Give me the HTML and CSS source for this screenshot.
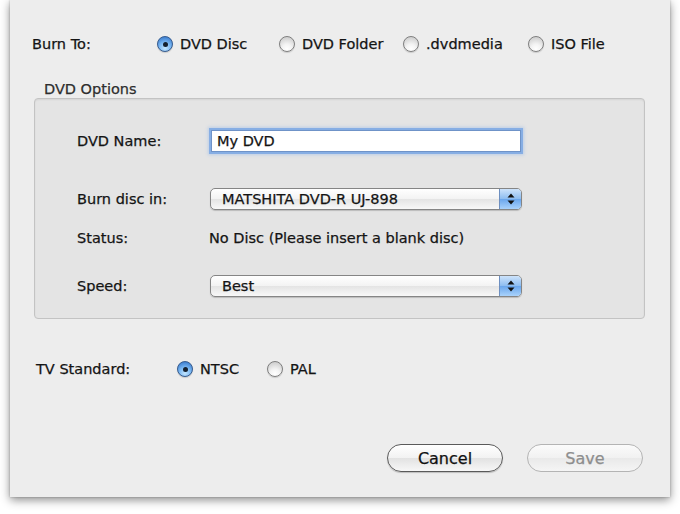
FILE: index.html
```html
<!DOCTYPE html>
<html>
<head>
<meta charset="utf-8">
<link rel="stylesheet" href="styles.css">
</head>
<body>
<div class="window">
  <div class="burn-row">
    <div class="burn-label">Burn To:</div>
    <div class="burn-options">
      <label class="radio-item"><span class="radio on"></span><span>DVD Disc</span></label>
      <label class="radio-item"><span class="radio"></span><span>DVD Folder</span></label>
      <label class="radio-item"><span class="radio"></span><span>.dvdmedia</span></label>
      <label class="radio-item"><span class="radio"></span><span>ISO File</span></label>
    </div>
  </div>

  <div class="legend">DVD Options</div>
  <div class="group">
    <div class="grow row-name">
      <div class="glabel">DVD Name:</div>
      <div class="field"><span>My DVD</span></div>
    </div>
    <div class="grow row-burn">
      <div class="glabel">Burn disc in:</div>
      <div class="popup">
        <span class="popup-text">MATSHITA DVD-R UJ-898</span>
        <span class="popup-arrows">
          <svg width="8" height="12" viewBox="0 0 8 12"><path d="M4 0.5 L7.5 4.5 H0.5 Z M4 11.5 L7.5 7.5 H0.5 Z" fill="#111"/></svg>
        </span>
      </div>
    </div>
    <div class="grow row-status">
      <div class="glabel">Status:</div>
      <div class="status">No Disc (Please insert a blank disc)</div>
    </div>
    <div class="grow row-speed">
      <div class="glabel">Speed:</div>
      <div class="popup">
        <span class="popup-text">Best</span>
        <span class="popup-arrows">
          <svg width="8" height="12" viewBox="0 0 8 12"><path d="M4 0.5 L7.5 4.5 H0.5 Z M4 11.5 L7.5 7.5 H0.5 Z" fill="#111"/></svg>
        </span>
      </div>
    </div>
  </div>

  <div class="tv-row">
    <div class="tv-label">TV Standard:</div>
    <label class="radio-item ntsc"><span class="radio on"></span><span>NTSC</span></label>
    <label class="radio-item"><span class="radio"></span><span>PAL</span></label>
  </div>

  <div class="buttons">
    <div class="button">Cancel</div>
    <div class="button disabled">Save</div>
  </div>
</div>
</body>
</html>
```

FILE: styles.css
```css
html, body {
  margin: 0;
  padding: 0;
  background: #ffffff;
}
body {
  width: 680px;
  height: 514px;
  overflow: hidden;
  font-family: "DejaVu Sans", "Liberation Sans", sans-serif;
  font-size: 14.5px;
  color: #141414;
  -webkit-text-stroke: 0.25px currentColor;
}
.window {
  margin-left: 10px;
  width: 660px;
  height: 497px;
  background: #ededed;
  box-shadow: 0 3px 9px rgba(0, 0, 0, 0.45), 0 0 2px rgba(0, 0, 0, 0.25);
  display: flex;
  flex-direction: column;
}
.burn-row {
  margin-top: 34px;
  height: 20px;
  padding-left: 22px;
  display: flex;
  align-items: center;
}
.burn-label {
  width: 125px;
}
.burn-options {
  display: grid;
  grid-template-columns: 122px 124px 125px auto;
}
.radio-item {
  display: flex;
  align-items: center;
  gap: 7px;
}
.radio {
  box-sizing: border-box;
  width: 16px;
  height: 16px;
  border-radius: 50%;
  border: 1px solid #7e7e7e;
  background: radial-gradient(circle at 50% 85%, #ffffff 0%, #f3f3f3 35%, #d2d2d2 80%);
  box-shadow: 0 1px 1px rgba(0,0,0,0.15);
  display: flex;
  align-items: center;
  justify-content: center;
  flex-shrink: 0;
}
.radio.on {
  border-color: #3b5f90;
  background: radial-gradient(circle at 50% 80%, #c3e6ff 0%, #78b6f2 45%, #3d7fd0 85%), #5b9be0;
}
.radio.on::after {
  content: "";
  width: 5px;
  height: 5px;
  border-radius: 50%;
  background: #14202e;
}
.legend {
  margin-top: 26px;
  height: 18px;
  line-height: 18px;
  padding-left: 34px;
  color: #2e2e2e;
}
.group {
  margin-left: 24px;
  width: 611px;
  height: 221px;
  box-sizing: border-box;
  border: 1px solid #c3c3c3;
  border-radius: 4px;
  background: #e4e4e4;
  box-shadow: inset 0 1px 2px rgba(0,0,0,0.07);
  padding-left: 42px;
  display: flex;
  flex-direction: column;
}
.grow {
  display: flex;
  align-items: center;
}
.glabel {
  width: 132px;
}
.row-name { margin-top: 29px; height: 26px; }
.row-burn { margin-top: 33px; height: 24px; }
.row-status { margin-top: 17px; height: 20px; }
.row-speed { margin-top: 26px; height: 24px; }
.field {
  box-sizing: border-box;
  width: 310px;
  height: 22px;
  margin-left: 2px;
  background: #ffffff;
  border: 1px solid #6f93c8;
  box-shadow: 0 0 0 2px rgba(120, 165, 228, 0.8), 0 0 3px 3px rgba(140, 180, 235, 0.45);
  display: flex;
  align-items: center;
  padding-left: 5px;
}
.popup {
  box-sizing: border-box;
  width: 312px;
  height: 22px;
  margin-left: 1px;
  border: 1px solid #858585;
  border-radius: 5px;
  background: linear-gradient(#ffffff, #f3f3f3 50%, #e4e4e4 51%, #f8f8f8);
  box-shadow: 0 1px 1px rgba(0,0,0,0.18);
  display: flex;
  align-items: center;
  overflow: hidden;
}
.popup-text {
  flex: 1;
  padding-left: 11px;
}
.popup-arrows {
  width: 21px;
  height: 100%;
  border-left: 1px solid #6d8fc0;
  background: linear-gradient(#cde3fb, #8cbcf0 50%, #6aa6ec 51%, #a9d2fb);
  display: flex;
  align-items: center;
  justify-content: center;
}
.popup-arrows svg {
  display: block;
}
.tv-row {
  margin-top: 40px;
  height: 20px;
  padding-left: 26px;
  display: flex;
  align-items: center;
}
.tv-label {
  width: 141px;
}
.ntsc {
  width: 90px;
}
.buttons {
  margin-top: 65px;
  padding-right: 27px;
  display: flex;
  justify-content: flex-end;
  gap: 24px;
}
.button {
  box-sizing: border-box;
  width: 116px;
  height: 28px;
  border: 1px solid #5a5a5a;
  border-radius: 14px;
  background: linear-gradient(#ffffff, #f2f2f2 50%, #e2e2e2 51%, #f7f7f7);
  box-shadow: 0 1px 1px rgba(0,0,0,0.2);
  display: flex;
  align-items: center;
  justify-content: center;
  font-size: 16px;
  color: #111;
}
.button.disabled {
  border-color: #b4b4b4;
  color: #8e8e8e;
  background: linear-gradient(#fbfbfb, #f1f1f1 50%, #e9e9e9 51%, #f5f5f5);
  box-shadow: none;
}
```
